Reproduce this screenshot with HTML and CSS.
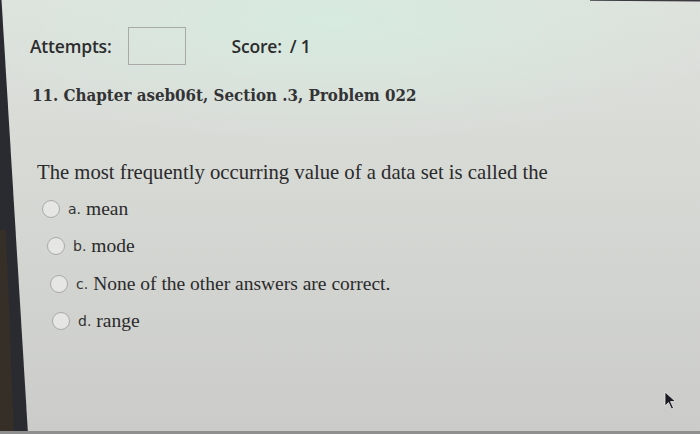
FILE: index.html
```html
<!DOCTYPE html>
<html>
<head>
<meta charset="utf-8">
<link rel="stylesheet" href="styles.css">
</head>
<body>
<div class="screen">
  <div class="meta">
    <span class="label">Attempts:</span>
    <span class="box"></span>
    <span class="label score">Score:</span>
    <span class="label frac">/ 1</span>
  </div>
  <h2 class="title">11. Chapter aseb06t, Section .3, Problem 022</h2>
  <p class="question">The most frequently occurring value of a data set is called the</p>
  <ul class="options">
    <li class="opt o1"><span class="radio"></span><span class="key">a.</span> mean</li>
    <li class="opt o2"><span class="radio"></span><span class="key">b.</span> mode</li>
    <li class="opt o3"><span class="radio"></span><span class="key">c.</span> None of the other answers are correct.</li>
    <li class="opt o4"><span class="radio"></span><span class="key">d.</span> range</li>
  </ul>
  <svg class="bezel" width="700" height="434" viewBox="0 0 700 434">
    <polygon points="0,0 1.5,0 28,434 0,434" fill="#2a2a31"/>
    <polygon points="0,230 6,230 14,434 0,434" fill="#3a3126" opacity="0.8"/>
    <polygon points="590,0 700,0 700,1.6 590,0.8" fill="#3a3a40"/>
    <rect x="0" y="431" width="700" height="3" fill="#8e8f8e"/>
  </svg>
  <svg class="cursor" width="14" height="20" viewBox="0 0 14 20">
    <path d="M1,1 L1,15 L4.5,11.5 L7.5,18 L9.5,17 L6.5,10.5 L11.5,10.5 Z" fill="#1a1a22" stroke="#e8e8e8" stroke-width="0.8"/>
  </svg>
</div>
</body>
</html>
```
FILE: styles.css
```css
html, body {
  margin: 0;
  padding: 0;
}
.screen {
  position: relative;
  width: 700px;
  height: 434px;
  overflow: hidden;
  background:
    radial-gradient(ellipse 420px 120px at 330px 20px, rgba(214, 236, 224, 0.9), rgba(214, 236, 224, 0) 100%),
    linear-gradient(180deg, #dfe1dc 0%, #d6d8d4 45%, #cbccc9 100%);
  color: #2e2e30;
  padding: 27px 0 0 30px;
  box-sizing: border-box;
}
.meta {
  display: flex;
  align-items: center;
  height: 38px;
}
.label {
  font-family: "Open Sans", sans-serif;
  font-weight: 600;
  font-size: 17.5px;
  letter-spacing: -0.2px;
  color: #2c2c2e;
}
.box {
  display: inline-block;
  width: 56px;
  height: 36px;
  border: 1px solid #a9aaa8;
  margin-left: 16px;
}
.score {
  margin-left: 46px;
}
.frac {
  margin-left: 8px;
}
.title {
  margin: 20px 0 0 2px;
  font-family: "DejaVu Serif Condensed", "DejaVu Serif", serif;
  font-stretch: condensed;
  font-weight: bold;
  font-size: 16.8px;
  letter-spacing: 0;
  color: #333335;
}
.question {
  margin: 56px 0 0 7px;
  font-family: "Liberation Serif", serif;
  font-size: 20.7px;
  color: #2a2a2c;
}
.options {
  list-style: none;
  margin: 6px 0 0 0;
  padding: 0;
}
.opt {
  display: flex;
  align-items: center;
  height: 37.5px;
  font-family: "Liberation Serif", serif;
  font-size: 19.5px;
  color: #2a2a2c;
}
.o1 { margin-left: 12px; }
.o2 { margin-left: 17px; }
.o3 { margin-left: 20px; }
.o4 { margin-left: 22px; }
.radio {
  border: 1.5px solid #a8aaa8;
  border-radius: 50%;
  background: #e6e7e4;
  margin-right: 8px;
  box-sizing: border-box;
  width: 18px;
  height: 18px;
}
.key {
  font-family: "DejaVu Sans", sans-serif;
  font-size: 14px;
  margin-right: 5px;
  color: #333;
}
.bezel {
  position: absolute;
  left: 0;
  top: 0;
}
.cursor {
  position: absolute;
  left: 664px;
  top: 391px;
}
```
